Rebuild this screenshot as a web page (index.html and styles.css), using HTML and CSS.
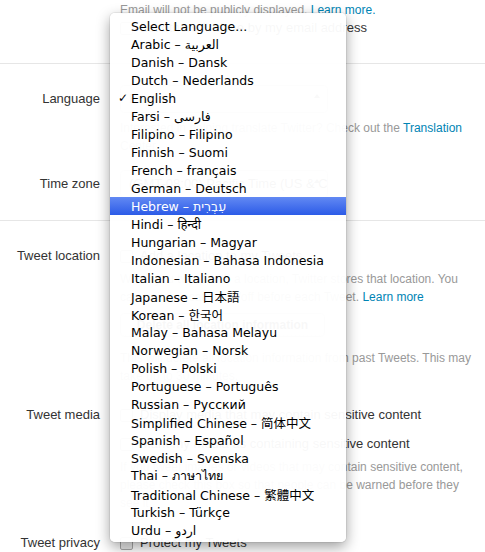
FILE: index.html
```html
<!DOCTYPE html>
<html lang="en">
<head>
<meta charset="utf-8">
<title>Account settings</title>
<link rel="stylesheet" href="styles.css">
</head>
<body>
<div class="page">
  <section class="sec sec-email">
    <div class="row">
      <div class="label"></div>
      <div class="content">
        <p class="help">Email will not be publicly displayed. <a class="link">Learn more.</a></p>
        <div class="check"><span class="box"></span>Let others find me by my email address</div>
      </div>
    </div>
  </section>

  <section class="sec sec-lang">
    <div class="row row-lang">
      <div class="label label-field">Language</div>
      <div class="content">
        <div class="select">English<span class="arrows"></span></div>
        <p class="help help-lang">Interested in helping translate Twitter? Check out the <a class="link">Translation</a> Center.</p>
      </div>
    </div>
    <div class="row row-tz">
      <div class="label label-field">Time zone</div>
      <div class="content">
        <div class="select">(GMT-08:00) Pacific Time (US &amp; Canada)<span class="arrows"></span></div>
      </div>
    </div>
  </section>

  <section class="sec sec-tweet">
    <div class="row row-loc">
      <div class="label">Tweet location</div>
      <div class="content">
        <div class="check"><span class="box"></span>Add a location to my Tweets</div>
        <p class="help help-loc">When you tweet with a location, Twitter stores that location. You can switch location on/off before each Tweet. <a class="link">Learn more</a></p>
        <div class="button">Delete all location information</div>
        <p class="help help-del">This will delete all location information from past Tweets. This may take up to 30 minutes.</p>
      </div>
    </div>
    <div class="row row-media">
      <div class="label">Tweet media</div>
      <div class="content">
        <div class="check"><span class="box"></span>Display media that may contain sensitive content</div>
        <div class="check check-2"><span class="box"></span>Mark my media as containing sensitive content</div>
        <p class="help help-media">If you tweet images or videos that may contain sensitive content, please check this box so that people can be warned before they see it.</p>
      </div>
    </div>
    <div class="row row-priv">
      <div class="label">Tweet privacy</div>
      <div class="content">
        <div class="check"><span class="box"></span>Protect my Tweets</div>
      </div>
    </div>
  </section>
</div>

<ul class="menu">
  <li class="item"><span class="mark"></span><span class="txt">Select Language...</span></li>
  <li class="item"><span class="mark"></span><span class="txt">Arabic – العربية</span></li>
  <li class="item"><span class="mark"></span><span class="txt">Danish – Dansk</span></li>
  <li class="item"><span class="mark"></span><span class="txt">Dutch – Nederlands</span></li>
  <li class="item"><span class="mark">✓</span><span class="txt">English</span></li>
  <li class="item"><span class="mark"></span><span class="txt">Farsi – فارسی</span></li>
  <li class="item"><span class="mark"></span><span class="txt">Filipino – Filipino</span></li>
  <li class="item"><span class="mark"></span><span class="txt">Finnish – Suomi</span></li>
  <li class="item"><span class="mark"></span><span class="txt">French – français</span></li>
  <li class="item"><span class="mark"></span><span class="txt">German – Deutsch</span></li>
  <li class="item item-active"><span class="mark"></span><span class="txt">Hebrew – עִבְרִית</span></li>
  <li class="item"><span class="mark"></span><span class="txt">Hindi – हिन्दी</span></li>
  <li class="item"><span class="mark"></span><span class="txt">Hungarian – Magyar</span></li>
  <li class="item"><span class="mark"></span><span class="txt">Indonesian – Bahasa Indonesia</span></li>
  <li class="item"><span class="mark"></span><span class="txt">Italian – Italiano</span></li>
  <li class="item"><span class="mark"></span><span class="txt">Japanese – <span class="ja">日本語</span></span></li>
  <li class="item"><span class="mark"></span><span class="txt">Korean – <span class="ko">한국어</span></span></li>
  <li class="item"><span class="mark"></span><span class="txt">Malay – Bahasa Melayu</span></li>
  <li class="item"><span class="mark"></span><span class="txt">Norwegian – Norsk</span></li>
  <li class="item"><span class="mark"></span><span class="txt">Polish – Polski</span></li>
  <li class="item"><span class="mark"></span><span class="txt">Portuguese – Português</span></li>
  <li class="item"><span class="mark"></span><span class="txt">Russian – Русский</span></li>
  <li class="item"><span class="mark"></span><span class="txt">Simplified Chinese – <span class="sc">简体中文</span></span></li>
  <li class="item"><span class="mark"></span><span class="txt">Spanish – Español</span></li>
  <li class="item"><span class="mark"></span><span class="txt">Swedish – Svenska</span></li>
  <li class="item"><span class="mark"></span><span class="txt">Thai – ภาษาไทย</span></li>
  <li class="item"><span class="mark"></span><span class="txt">Traditional Chinese – <span class="tc">繁體中文</span></span></li>
  <li class="item"><span class="mark"></span><span class="txt">Turkish – Türkçe</span></li>
  <li class="item"><span class="mark"></span><span class="txt">Urdu – اردو</span></li>
</ul>
</body>
</html>
```

FILE: styles.css
```css
html, body {
  margin: 0;
  padding: 0;
  background: #fff;
}
body {
  font-family: "Liberation Sans", Arial, sans-serif;
  font-size: 13px;
  color: #333;
  width: 485px;
  height: 552px;
  overflow: hidden;
  position: relative;
}
p { margin: 0; }

.sec {
  border-bottom: 1px solid #e6e6e6;
}
.sec-email {
  padding-top: 1px;
  padding-bottom: 26px;
}
.sec-lang {
  padding-top: 21px;
  padding-bottom: 22px;
}
.sec-tweet {
  border-bottom: none;
}

.row {
  display: grid;
  grid-template-columns: 100px 355px;
  column-gap: 20px;
}
.label {
  text-align: right;
  line-height: 18px;
  color: #333;
}
.label-field {
  line-height: 28px;
}
.help {
  color: #999;
  font-size: 12px;
  line-height: 18px;
}
.link {
  color: #0084b4;
  text-decoration: none;
}
.check {
  display: flex;
  align-items: center;
  line-height: 18px;
  height: 18px;
  color: #333;
  white-space: nowrap;
}
.box {
  width: 11px;
  height: 11px;
  border: 1px solid #a9a9a9;
  border-radius: 2px;
  background: linear-gradient(#fff, #e9e9e9);
  margin-right: 7px;
  flex: none;
}
.select {
  position: relative;
  box-sizing: border-box;
  width: 208px;
  height: 28px;
  border: 1px solid #ccc;
  border-radius: 4px;
  background: linear-gradient(#fff, #f3f3f3);
  padding: 0 8px;
  line-height: 26px;
  color: #333;
  white-space: nowrap;
  overflow: hidden;
}
.arrows {
  position: absolute;
  right: 7px;
  top: 8px;
  width: 0;
  height: 0;
  border-left: 3px solid transparent;
  border-right: 3px solid transparent;
  border-bottom: 4px solid #555;
}
.help-lang { margin-top: 6px; }
.row-tz { margin-top: 15px; }

.row-loc { margin-top: 26px; }
.help-loc { margin-top: 5px; }
.button {
  margin-top: 7px;
  box-sizing: border-box;
  width: 205px;
  height: 24px;
  border: 1px solid #ccc;
  border-radius: 4px;
  background: linear-gradient(#fff, #e6e6e6);
  font-weight: bold;
  font-size: 12px;
  line-height: 22px;
  text-align: center;
  color: #333;
}
.help-del { margin-top: 12px; }

.row-media { margin-top: 21px; }
.check-2 { margin-top: 11px; }
.help-media { margin-top: 5px; }
.row-priv { margin-top: 22px; }

/* native-style popup menu */
.menu {
  position: absolute;
  left: 110px;
  top: 13px;
  width: 236px;
  margin: 0;
  padding: 4px 0 3px;
  list-style: none;
  background: rgba(255, 255, 255, 0.965);
  border-radius: 5px;
  box-shadow: 0 0 0 1px rgba(0, 0, 0, 0.06), 0 5px 14px rgba(0, 0, 0, 0.38);
  font-family: "DejaVu Sans", "Noto Sans", "Noto Sans CJK SC", sans-serif;
  font-size: 12.5px;
  color: #000;
}
.item {
  display: flex;
  align-items: center;
  height: 18px;
  white-space: nowrap;
}
.item-active {
  background: linear-gradient(#6289f3, #2c5be7);
  color: #fff;
}
.mark {
  flex: none;
  width: 21px;
  box-sizing: border-box;
  padding-left: 8px;
  font-size: 12px;
}
.txt {
  white-space: pre;
}
.ja { font-family: "Noto Sans CJK JP", sans-serif; }
.ko { font-family: "Noto Sans CJK KR", sans-serif; }
.sc { font-family: "Noto Sans CJK SC", sans-serif; }
.tc { font-family: "Noto Sans CJK TC", sans-serif; }
```
